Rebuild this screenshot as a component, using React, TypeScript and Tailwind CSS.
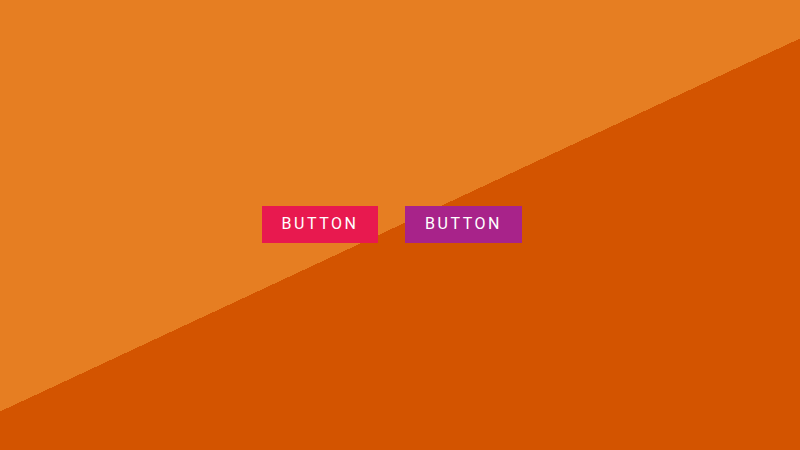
export default function App() {
  return (
    <div className="h-screen w-full bg-[linear-gradient(155deg,#e67e22_50%,#d35400_50%)] flex items-center justify-center pr-4 pb-[2px] font-['Roboto',sans-serif]">
      <div className="flex items-center gap-[27px]">
        <button className="w-[116px] h-[37px] bg-[#e8194f] text-white text-[16px] tracking-[2.5px] uppercase">
          Button
        </button>
        <button className="w-[117px] h-[37px] bg-[#a8238a] text-white text-[16px] tracking-[2.5px] uppercase">
          Button
        </button>
      </div>
    </div>
  );
}
